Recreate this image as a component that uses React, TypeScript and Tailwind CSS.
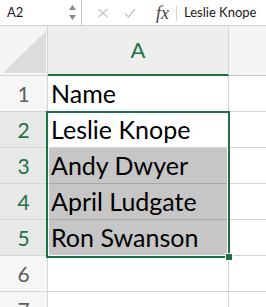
import React from "react";

const rows = [
  { n: "1", text: "Name", sel: false, gray: false },
  { n: "2", text: "Leslie Knope", sel: true, gray: false },
  { n: "3", text: "Andy Dwyer", sel: true, gray: true },
  { n: "4", text: "April Ludgate", sel: true, gray: true },
  { n: "5", text: "Ron Swanson", sel: true, gray: true },
  { n: "6", text: "", sel: false, gray: false },
  { n: "7", text: "", sel: false, gray: false },
];

export default function App() {
  return (
    <div
      className="w-[266px] h-[307px] overflow-hidden bg-white"
      style={{ fontFamily: "Lato, 'Liberation Sans', sans-serif" }}
    >
      {/* Formula bar */}
      <div className="flex h-[26px] border-b border-[#d2d2d2] items-stretch">
        <div className="w-[82px] flex items-center justify-between pl-[7px] pr-[5px] border-r border-[#c8c8c8]">
          <span className="text-[13px] text-[#1a1a1a]">A2</span>
          <div className="flex flex-col gap-[5px] items-center">
            <svg width="7" height="5" viewBox="0 0 7 5">
              <polygon points="3.5,0 7,5 0,5" fill="#8a8a8a" />
            </svg>
            <svg width="7" height="5" viewBox="0 0 7 5">
              <polygon points="0,0 7,0 3.5,5" fill="#8a8a8a" />
            </svg>
          </div>
        </div>
        <div className="flex items-center pl-[15px]">
          <svg width="12" height="10" viewBox="0 0 12 10">
            <path d="M1.5 1 L10.5 9 M10.5 1 L1.5 9" stroke="#c9c9c9" strokeWidth="1.6" fill="none" />
          </svg>
          <svg className="ml-[15px]" width="12" height="10" viewBox="0 0 12 10">
            <path d="M1 5.5 L4.5 9 L11 1" stroke="#c9c9c9" strokeWidth="1.6" fill="none" />
          </svg>
          <span
            className="ml-[20px] text-[18px] italic text-[#444] leading-none"
            style={{ fontFamily: "'Liberation Serif', 'DejaVu Serif', serif" }}
          >
            fx
          </span>
          <div className="ml-[7px] w-px h-[16px] bg-[#d6d6d6]" />
          <span className="ml-[7px] text-[13px] text-[#1a1a1a]">Leslie Knope</span>
        </div>
      </div>

      {/* Sheet */}
      <div className="relative">
        <div className="grid grid-cols-[48px_181px_1fr]">
          {/* Header row */}
          <div className="h-[50px] bg-[#f5f5f5] border-r border-b border-[#d4d4d4] flex items-end justify-end pb-[2px] pr-[1px]">
            <svg width="43" height="42" viewBox="0 0 43 42">
              <polygon points="0,42 43,42 43,0" fill="#dcdcdc" />
            </svg>
          </div>
          <div className="h-[50px] bg-[#eeeeee] border-r border-[#d4d4d4] border-b-2 border-b-[#1e7145] flex items-center justify-center">
            <span className="text-[22px] text-[#1e7145] leading-none">A</span>
          </div>
          <div className="h-[50px] bg-[#f5f5f5] border-b border-[#c4c4c4]" />

          {rows.map((r) => (
            <React.Fragment key={r.n}>
              <div
                className={
                  "h-[36px] border-r border-b border-[#d4d4d4] flex items-center justify-center text-[21px] " +
                  (r.sel ? "bg-[#e8e8e8] text-[#1e7145]" : "bg-[#f6f6f6] text-[#5e5e5e]")
                }
              >
                {r.n}
              </div>
              <div
                className={
                  "h-[36px] border-r border-[#d4d4d4] flex items-center pl-[3px] text-[25px] text-black whitespace-nowrap overflow-hidden " +
                  (r.gray ? "bg-[#c6c6c6] border-b border-b-[#a8a8a8]" : "bg-white border-b border-b-[#d4d4d4]")
                }
              >
                {r.text}
              </div>
              <div className="h-[36px] border-b border-[#d4d4d4] bg-white" />
            </React.Fragment>
          ))}
        </div>

        {/* Selection box */}
        <div className="absolute left-[46px] top-[85px] w-[184px] h-[147px] border-2 border-[#1e7145] pointer-events-none">
          <div className="absolute inset-0 border border-white" />
          <div className="absolute right-[-5px] bottom-[-5px] w-[8px] h-[8px] bg-[#1e7145] border border-white" />
        </div>
      </div>
    </div>
  );
}
